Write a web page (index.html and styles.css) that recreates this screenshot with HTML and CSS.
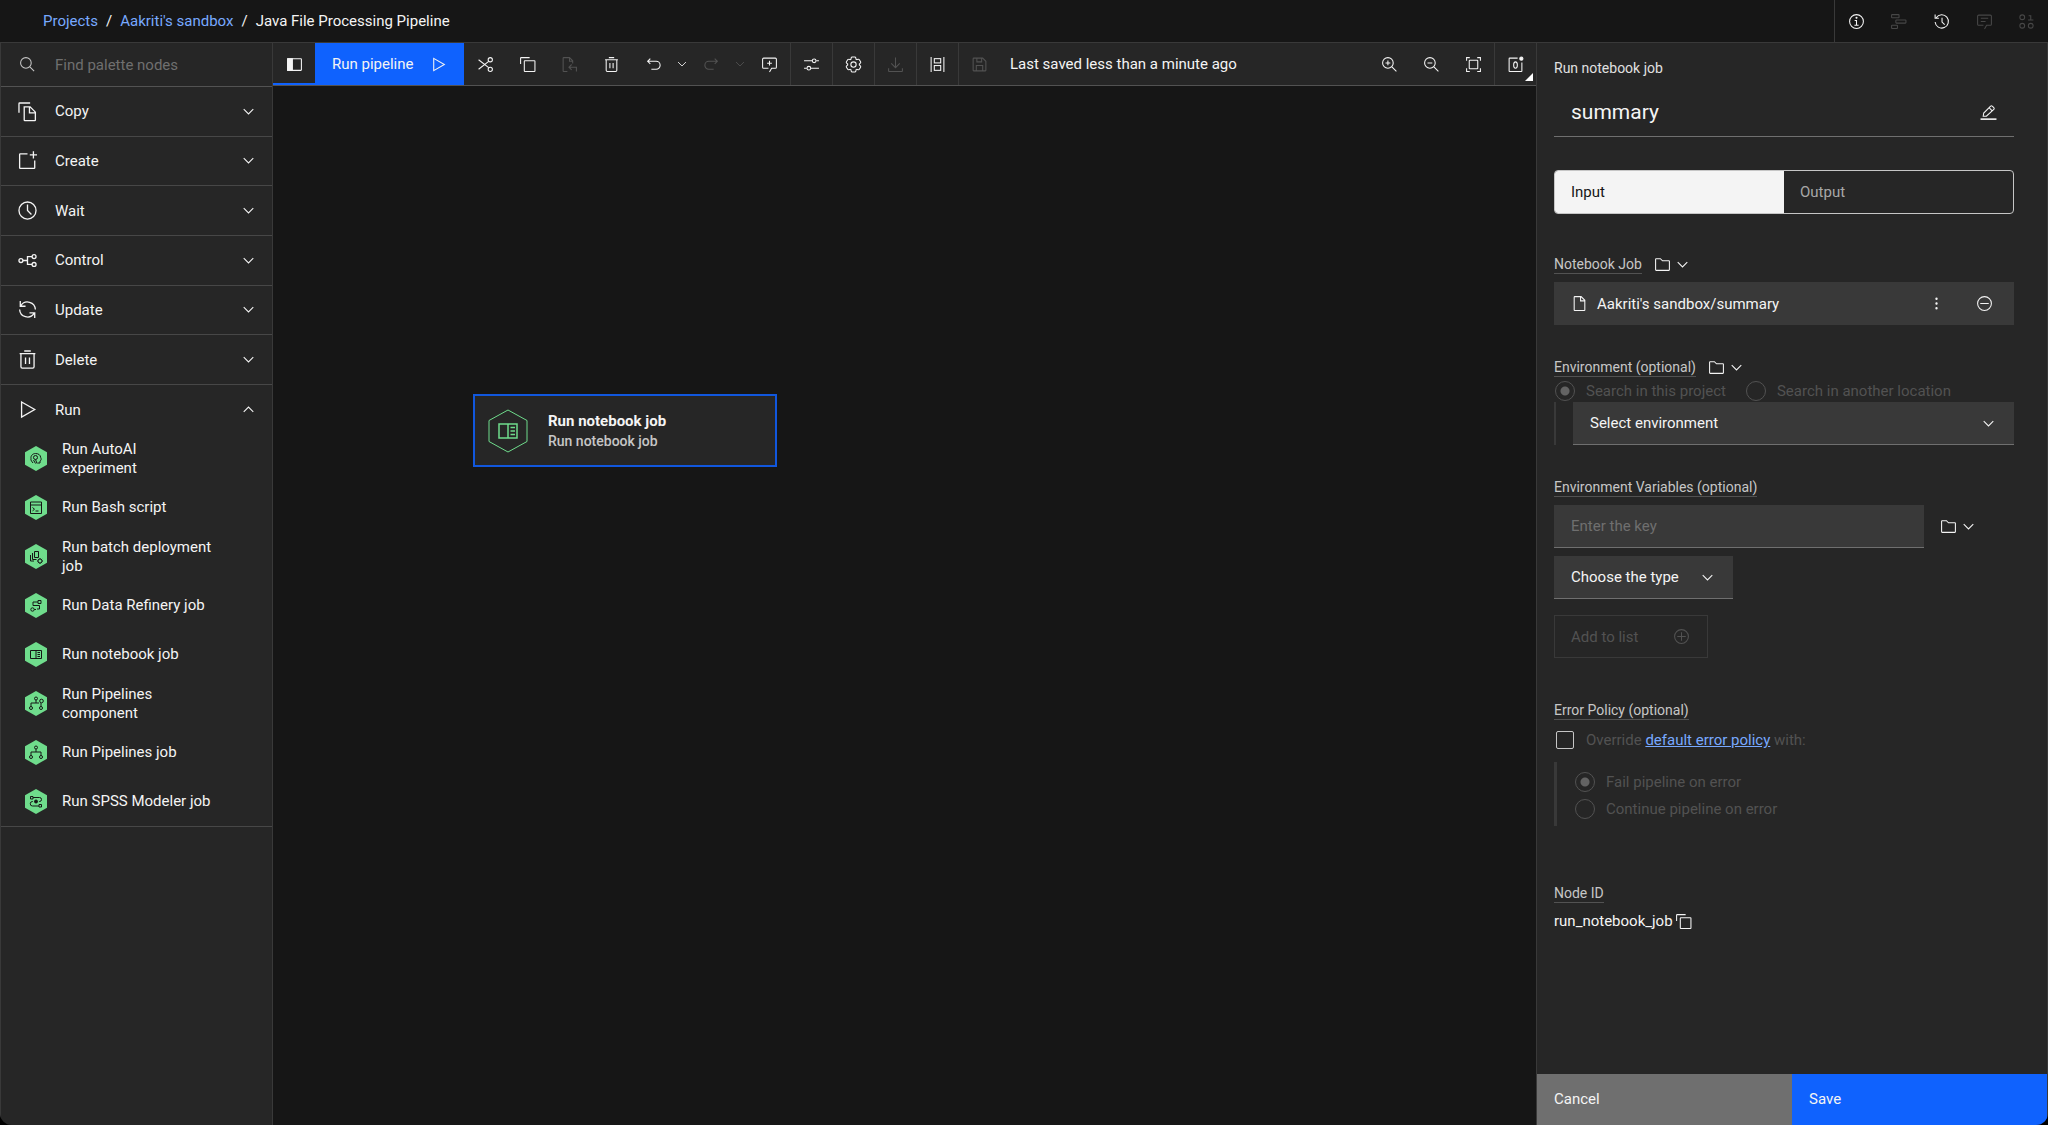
FILE: index.html
```html
<!DOCTYPE html>
<html lang="en">
<head>
<meta charset="utf-8">
<meta name="viewport" content="width=device-width, initial-scale=1">
<title>Java File Processing Pipeline</title>
<link rel="stylesheet" href="styles.css">
</head>
<body>
<svg class="sprite" aria-hidden="true">
  <symbol id="chevron-down" viewBox="0 0 32 32"><path d="M7 11.500l9 9 9-9"/></symbol>
  <symbol id="chevron-up" viewBox="0 0 32 32"><path d="M7 20.500l9-9 9 9"/></symbol>
  <symbol id="search" viewBox="0 0 32 32"><circle cx="13" cy="13" r="10"/><path d="M20.500 20.500L28.500 28.500"/></symbol>
  <symbol id="copy-file" viewBox="0 0 32 32"><path d="M3 18V4a1 1 0 0 1 1-1h16M11 9h9l8 8v12a1 1 0 0 1-1 1H12a1 1 0 0 1-1-1zM19 9v9h9"/></symbol>
  <symbol id="create" viewBox="0 0 32 32"><path d="M16 6H5a1 1 0 0 0-1 1v20a1 1 0 0 0 1 1h21a1 1 0 0 0 1-1V16M25 2v11M19.500 7.500h11"/></symbol>
  <symbol id="clock" viewBox="0 0 32 32"><circle cx="16" cy="16" r="13"/><path d="M16 7v9l6 6"/></symbol>
  <symbol id="control" viewBox="0 0 32 32"><circle cx="6" cy="16" r="3"/><circle cx="26" cy="10" r="3"/><circle cx="26" cy="22" r="3"/><path d="M9 16h7M23 10h-7v12h7"/></symbol>
  <symbol id="renew" viewBox="0 0 32 32"><path d="M6 10a12 12 0 0 1 22 6M5 3v8h8M26 22a12 12 0 0 1-22-6M27 29v-8h-8"/></symbol>
  <symbol id="trash" viewBox="0 0 32 32"><path d="M4 7h24M11 3h10M6 7v20a2 2 0 0 0 2 2h16a2 2 0 0 0 2-2V7M13 13v10M19 13v10"/></symbol>
  <symbol id="play" viewBox="0 0 32 32"><path d="M7 4.500L27 16 7 27.500z"/></symbol>
  <symbol id="panel" viewBox="0 0 32 32"><rect x="3" y="5" width="26" height="22" rx="1"/><path class="solid" d="M3 5h9v22H3z"/></symbol>
  <symbol id="cut" viewBox="0 0 32 32"><circle cx="25" cy="7" r="4"/><circle cx="25" cy="25" r="4"/><path d="M3 7l19 15M3 25L22 10"/></symbol>
  <symbol id="copy" viewBox="0 0 32 32"><rect x="10" y="9" width="20" height="20" rx="1"/><path d="M3 15V4a1 1 0 0 1 1-1h16"/></symbol>
  <symbol id="paste" viewBox="0 0 32 32"><path d="M12 29H5a1 1 0 0 1-1-1V4a1 1 0 0 1 1-1h11l6 6v5M16 3v7h6M29 29v-8H16M20 16l-5 5 5 5"/></symbol>
  <symbol id="undo" viewBox="0 0 32 32"><path d="M5 10h16a7.500 7.500 0 0 1 0 15h-9M10 5l-5 5 5 5"/></symbol>
  <symbol id="redo" viewBox="0 0 32 32"><path d="M27 10H11a7.500 7.500 0 0 0 0 15h9M22 5l5 5-5 5"/></symbol>
  <symbol id="comment-add" viewBox="0 0 32 32"><path d="M16 30l4-7h7a2 2 0 0 0 2-2V6a2 2 0 0 0-2-2H5a2 2 0 0 0-2 2v15a2 2 0 0 0 2 2h9M16 9v9M11.500 13.500h9"/></symbol>
  <symbol id="adjust" viewBox="0 0 32 32"><circle cx="21" cy="9" r="3.500"/><circle cx="11" cy="23" r="3.500"/><path d="M2 9h15M25 9h5M2 23h5M15 23h15"/></symbol>
  <symbol id="gear" viewBox="0 0 32 32"><circle cx="16" cy="16" r="5"/><path d="M27 16.760c0-.25 0-.5 0-.76s0-.51 0-.77l1.920-1.680A2 2 0 0 0 29.300 11L26.940 7a2 2 0 0 0-1.730-1 2 2 0 0 0-.64.1l-2.430.82a11.350 11.350 0 0 0-1.310-.75l-.51-2.520a2 2 0 0 0-2-1.610H13.640a2 2 0 0 0-2 1.610l-.51 2.520a11.480 11.480 0 0 0-1.320.75L7.430 6.060A2 2 0 0 0 6.790 6 2 2 0 0 0 5.060 7L2.700 11a2 2 0 0 0 .41 2.510L5 15.240c0 .25 0 .5 0 .76s0 .51 0 .77L3.110 18.450A2 2 0 0 0 2.700 21L5.060 25a2 2 0 0 0 1.730 1 2 2 0 0 0 .64-.1l2.430-.82a11.350 11.350 0 0 0 1.310.75l.51 2.520a2 2 0 0 0 2 1.610h4.720a2 2 0 0 0 2-1.610l.51-2.520a11.480 11.480 0 0 0 1.320-.75l2.420.82a2 2 0 0 0 .64.1 2 2 0 0 0 1.730-1L29.300 21a2 2 0 0 0-.41-2.510z"/></symbol>
  <symbol id="download" viewBox="0 0 32 32"><path d="M16 3v19M8 14l8 8 8-8M3 23v5a1 1 0 0 0 1 1h24a1 1 0 0 0 1-1v-5"/></symbol>
  <symbol id="arrange" viewBox="0 0 32 32"><path d="M4 2v28M28 2v28"/><rect x="10" y="5" width="12" height="8"/><rect x="10" y="18" width="12" height="9"/></symbol>
  <symbol id="save" viewBox="0 0 32 32"><path d="M5 4h17l6 6v17a1 1 0 0 1-1 1H5a1 1 0 0 1-1-1V5a1 1 0 0 1 1-1zM10 28V18h12v10M11 4v7h9V4"/></symbol>
  <symbol id="zoom-in" viewBox="0 0 32 32"><circle cx="13" cy="13" r="10"/><path d="M20.500 20.500L29 29M13 8.500v9M8.500 13h9"/></symbol>
  <symbol id="zoom-out" viewBox="0 0 32 32"><circle cx="13" cy="13" r="10"/><path d="M20.500 20.500L29 29M8.500 13h9"/></symbol>
  <symbol id="fit" viewBox="0 0 32 32"><rect x="8" y="8" width="16" height="16" rx="1"/><path d="M3 9V3h6M23 3h6v6M29 23v6h-6M9 29H3v-6"/></symbol>
  <symbol id="messages" viewBox="0 0 32 32"><path d="M20 4H5a1 1 0 0 0-1 1v23a1 1 0 0 0 1 1h22a1 1 0 0 0 1-1V12"/><ellipse cx="16" cy="17" rx="3.500" ry="6"/><circle class="solid" cx="27" cy="5" r="3"/></symbol>
  <symbol id="info" viewBox="0 0 32 32"><circle cx="16" cy="16" r="13"/><path d="M12.500 14H16v9M12 23h8"/><circle class="solid" cx="16" cy="9" r="1"/></symbol>
  <symbol id="flow" viewBox="0 0 32 32"><rect x="3" y="3" width="14" height="6" rx="1"/><rect x="11" y="13" width="19" height="6" rx="1"/><rect x="3" y="23" width="11" height="6" rx="1"/></symbol>
  <symbol id="history" viewBox="0 0 32 32"><path d="M6 9a12.500 12.500 0 1 1-2 8M4 3v7h7M17 9v8l5 5"/></symbol>
  <symbol id="comment" viewBox="0 0 32 32"><path d="M16 30l4-7h7a2 2 0 0 0 2-2V6a2 2 0 0 0-2-2H5a2 2 0 0 0-2 2v15a2 2 0 0 0 2 2h9M9 10h14M9 16h9"/></symbol>
  <symbol id="binary" viewBox="0 0 32 32"><circle cx="8" cy="8" r="4.500"/><circle cx="8" cy="24" r="4.500"/><circle cx="24" cy="24" r="4.500"/><path d="M20 5h4v8M19 13h10"/></symbol>
  <symbol id="edit" viewBox="0 0 32 32"><path d="M6 23l1-6L20 4a2 2 0 0 1 3 0l3 3a2 2 0 0 1 0 3L12 23zM17 7l6 6"/><path class="bar" d="M1 28.500h30"/></symbol>
  <symbol id="folder" viewBox="0 0 32 32"><path d="M4 5h8l4 4h12a1 1 0 0 1 1 1v16a1 1 0 0 1-1 1H4a1 1 0 0 1-1-1V6a1 1 0 0 1 1-1z"/></symbol>
  <symbol id="document" viewBox="0 0 32 32"><path d="M7 3h12l7 7v18a1 1 0 0 1-1 1H7a1 1 0 0 1-1-1V4a1 1 0 0 1 1-1zM18 3v8h8"/></symbol>
  <symbol id="overflow" viewBox="0 0 32 32"><circle class="solid" cx="16" cy="7" r="1.200"/><circle class="solid" cx="16" cy="16" r="1.200"/><circle class="solid" cx="16" cy="25" r="1.200"/></symbol>
  <symbol id="subtract" viewBox="0 0 32 32"><circle cx="16" cy="16" r="13"/><path d="M8 16h16"/></symbol>
  <symbol id="add" viewBox="0 0 32 32"><circle cx="16" cy="16" r="13"/><path d="M8 16h16M16 8v16"/></symbol>
  <symbol id="hexagon" viewBox="0 0 22 25"><path d="M11 0l11 6.250v12.500L11 25 0 18.750V6.250z"/></symbol>
</svg>

<header class="topbar">
  <nav class="breadcrumb" aria-label="Breadcrumb">
    <a href="#">Projects</a><span>/</span><a href="#">Aakriti's sandbox</a><span>/</span><span class="current">Java File Processing Pipeline</span>
  </nav>
  <div class="topbar-actions">
    <button type="button" aria-label="Information"><svg class="icon"><use href="#info"/></svg></button>
    <button type="button" aria-label="Flow" disabled><svg class="icon"><use href="#flow"/></svg></button>
    <button type="button" aria-label="History"><svg class="icon"><use href="#history"/></svg></button>
    <button type="button" aria-label="Comments" disabled><svg class="icon"><use href="#comment"/></svg></button>
    <button type="button" aria-label="Parameters" disabled><svg class="icon"><use href="#binary"/></svg></button>
  </div>
</header>

<div class="workspace">
  <aside class="palette">
    <div class="palette-search">
      <svg class="icon"><use href="#search"/></svg>
      <input type="search" placeholder="Find palette nodes" aria-label="Find palette nodes">
    </div>
    <div class="categories">
      <button type="button" class="category"><svg class="icon large"><use href="#copy-file"/></svg><span>Copy</span><svg class="icon"><use href="#chevron-down"/></svg></button>
      <button type="button" class="category"><svg class="icon large"><use href="#create"/></svg><span>Create</span><svg class="icon"><use href="#chevron-down"/></svg></button>
      <button type="button" class="category"><svg class="icon large"><use href="#clock"/></svg><span>Wait</span><svg class="icon"><use href="#chevron-down"/></svg></button>
      <button type="button" class="category"><svg class="icon large"><use href="#control"/></svg><span>Control</span><svg class="icon"><use href="#chevron-down"/></svg></button>
      <button type="button" class="category"><svg class="icon large"><use href="#renew"/></svg><span>Update</span><svg class="icon"><use href="#chevron-down"/></svg></button>
      <button type="button" class="category"><svg class="icon large"><use href="#trash"/></svg><span>Delete</span><svg class="icon"><use href="#chevron-down"/></svg></button>
    </div>
    <button type="button" class="category open"><svg class="icon large"><use href="#play"/></svg><span>Run</span><svg class="icon"><use href="#chevron-up"/></svg></button>
    <ul class="nodes">
      <li><svg class="badge" viewBox="0 0 22 25"><use class="hex" href="#hexagon" width="22" height="25"/><path d="M8 17c-1-1.500-2.500-2.500-2-4.500C5.500 9.500 8 7.500 10.500 7.500c3 0 5 1.500 5.200 4 .8 1.500.5 3-.7 3.500v2h-2.500M8.500 14l2 3.500M10.500 13.500l1.500 4"/><circle cx="10.500" cy="11.500" r="2"/></svg><span>Run AutoAI experiment</span></li>
      <li><svg class="badge" viewBox="0 0 22 25"><use class="hex" href="#hexagon" width="22" height="25"/><path d="M5.500 7h11v11.500h-11zM5.500 10h11M7.500 12.500l2 1.700-2 1.700M10.500 16h3"/></svg><span>Run Bash script</span></li>
      <li><svg class="badge" viewBox="0 0 22 25"><use class="hex" href="#hexagon" width="22" height="25"/><path d="M9.500 7.500h4v6h-4zM7.500 9v6.500h4M5.500 11v6h3.500"/><circle cx="15" cy="17" r="2"/><path d="M15 14v1M15 19v1M12 17h1M17 17h1M12.900 14.900l.7.7M16.400 18.400l.7.7M17.100 14.900l-.7.7M13.600 18.400l-.7.7"/></svg><span>Run batch deployment job</span></li>
      <li><svg class="badge" viewBox="0 0 22 25"><use class="hex" href="#hexagon" width="22" height="25"/><circle cx="7.500" cy="16.500" r="1.700"/><path d="M13 7.500h3v3h-3zM13 9H8v3.500h6.500V16H12M9.200 16.500H11"/></svg><span>Run Data Refinery job</span></li>
      <li><svg class="badge" viewBox="0 0 22 25"><use class="hex" href="#hexagon" width="22" height="25"/><path d="M5.500 8.500h11v8h-11zM11 8.500v8M12.500 10.500H15M12.500 12.500H15M12.500 14.500H15"/></svg><span>Run notebook job</span></li>
      <li><svg class="badge" viewBox="0 0 22 25"><use class="hex" href="#hexagon" width="22" height="25"/><circle cx="11" cy="7.500" r="1.500"/><circle cx="6" cy="17" r="1.500"/><circle cx="16" cy="17" r="1.500"/><path d="M11 9v3M6 15.500V12h8M16 15.500V12"/><circle cx="16.500" cy="10" r="1.800"/></svg><span>Run Pipelines component</span></li>
      <li><svg class="badge" viewBox="0 0 22 25"><use class="hex" href="#hexagon" width="22" height="25"/><circle cx="11" cy="7.500" r="1.500"/><circle cx="6" cy="17" r="1.500"/><circle cx="16" cy="17" r="1.500"/><path d="M11 9v3M6 15.500V12h10v3.500"/></svg><span>Run Pipelines job</span></li>
      <li><svg class="badge" viewBox="0 0 22 25"><use class="hex" href="#hexagon" width="22" height="25"/><path d="M5.500 7.500H8V10H5.500zM14 15.500h2.500V18H14zM8 8.500h6.500a1.500 1.500 0 0 1 0 4H14M14 17H7.500a1.700 1.700 0 0 1 0-4.500H8"/><circle class="dot" cx="11" cy="12.500" r="1.500"/></svg><span>Run SPSS Modeler job</span></li>
    </ul>
  </aside>

  <main class="editor">
    <div class="toolbar" role="toolbar" aria-label="Canvas tools">
      <button type="button" class="tool active" aria-label="Toggle palette"><svg class="icon"><use href="#panel"/></svg></button>
      <button type="button" class="run">Run pipeline<svg class="icon"><use href="#play"/></svg></button>
      <button type="button" class="tool" aria-label="Cut"><svg class="icon"><use href="#cut"/></svg></button>
      <button type="button" class="tool" aria-label="Copy"><svg class="icon"><use href="#copy"/></svg></button>
      <button type="button" class="tool" aria-label="Paste" disabled><svg class="icon"><use href="#paste"/></svg></button>
      <button type="button" class="tool" aria-label="Delete"><svg class="icon"><use href="#trash"/></svg></button>
      <button type="button" class="tool" aria-label="Undo"><svg class="icon"><use href="#undo"/></svg></button>
      <button type="button" class="tool narrow" aria-label="Undo options"><svg class="icon small"><use href="#chevron-down"/></svg></button>
      <button type="button" class="tool" aria-label="Redo" disabled><svg class="icon"><use href="#redo"/></svg></button>
      <button type="button" class="tool narrow" aria-label="Redo options" disabled><svg class="icon small"><use href="#chevron-down"/></svg></button>
      <button type="button" class="tool" aria-label="Add comment"><svg class="icon"><use href="#comment-add"/></svg></button>
      <button type="button" class="tool divided" aria-label="Adjust"><svg class="icon"><use href="#adjust"/></svg></button>
      <button type="button" class="tool divided" aria-label="Settings"><svg class="icon"><use href="#gear"/></svg></button>
      <button type="button" class="tool divided" aria-label="Download" disabled><svg class="icon"><use href="#download"/></svg></button>
      <button type="button" class="tool divided" aria-label="Arrange"><svg class="icon"><use href="#arrange"/></svg></button>
      <button type="button" class="tool divided" aria-label="Save" disabled><svg class="icon"><use href="#save"/></svg></button>
      <span class="saved">Last saved less than a minute ago</span>
      <button type="button" class="tool" aria-label="Zoom in"><svg class="icon"><use href="#zoom-in"/></svg></button>
      <button type="button" class="tool" aria-label="Zoom out"><svg class="icon"><use href="#zoom-out"/></svg></button>
      <button type="button" class="tool" aria-label="Zoom to fit"><svg class="icon"><use href="#fit"/></svg></button>
      <button type="button" class="tool divided corner" aria-label="Messages"><svg class="icon"><use href="#messages"/></svg></button>
    </div>
    <div class="canvas">
      <div class="node">
        <svg class="node-icon" viewBox="0 0 40 44"><path d="M20 1l19 10.500v21L20 43 1 32.500v-21z"/><path class="thick" d="M11 15h18v14H11zM20 15v14M22.500 18.500H27M22.500 22H27M22.500 25.500H27"/></svg>
        <div><strong>Run notebook job</strong><span>Run notebook job</span></div>
      </div>
    </div>
  </main>

  <aside class="details">
    <form class="fields">
      <p class="kind">Run notebook job</p>
      <div class="name"><input type="text" value="summary" aria-label="Node name"><button type="button" aria-label="Edit name"><svg class="icon"><use href="#edit"/></svg></button></div>
      <div class="switcher" role="tablist">
        <button type="button" role="tab" aria-selected="true">Input</button>
        <button type="button" role="tab" aria-selected="false">Output</button>
      </div>

      <section class="group first">
        <div class="heading"><span class="label">Notebook Job</span><button type="button" class="source" aria-label="Notebook job source"><svg class="icon"><use href="#folder"/></svg><svg class="icon"><use href="#chevron-down"/></svg></button></div>
        <div class="file"><svg class="icon"><use href="#document"/></svg><span>Aakriti's sandbox/summary</span><button type="button" aria-label="More"><svg class="icon"><use href="#overflow"/></svg></button><button type="button" aria-label="Remove"><svg class="icon"><use href="#subtract"/></svg></button></div>
      </section>

      <section class="group">
        <div class="heading"><label class="label" for="environment">Environment (optional)</label><button type="button" class="source" aria-label="Environment source"><svg class="icon"><use href="#folder"/></svg><svg class="icon"><use href="#chevron-down"/></svg></button></div>
        <div class="options"><label><input type="radio" name="scope" checked disabled>Search in this project</label><label><input type="radio" name="scope" disabled>Search in another location</label></div>
        <div class="nested"><div class="select"><select id="environment"><option>Select environment</option></select><svg class="icon"><use href="#chevron-down"/></svg></div></div>
      </section>

      <section class="group">
        <div class="heading"><label class="label" for="key">Environment Variables (optional)</label></div>
        <div class="key-row"><input id="key" class="key" type="text" placeholder="Enter the key"><button type="button" class="source" aria-label="Key source"><svg class="icon"><use href="#folder"/></svg><svg class="icon"><use href="#chevron-down"/></svg></button></div>
        <div class="select type"><select aria-label="Variable type"><option>Choose the type</option></select><svg class="icon"><use href="#chevron-down"/></svg></div>
        <button type="button" class="add" disabled>Add to list<svg class="icon"><use href="#add"/></svg></button>
      </section>

      <section class="group policy">
        <div class="heading"><span class="label">Error Policy (optional)</span></div>
        <div class="override"><input type="checkbox" id="override"><label for="override">Override <a href="#">default error policy</a> with:</label></div>
        <div class="choices"><label><input type="radio" name="policy" checked disabled>Fail pipeline on error</label><label><input type="radio" name="policy" disabled>Continue pipeline on error</label></div>
      </section>

      <section class="group identity">
        <div class="heading"><span class="label">Node ID</span></div>
        <div class="node-id"><span>run_notebook_job</span><button type="button" aria-label="Copy node ID"><svg class="icon"><use href="#copy"/></svg></button></div>
      </section>
    </form>
    <footer class="actions"><button type="button" class="cancel">Cancel</button><button type="button" class="submit">Save</button></footer>
  </aside>
</div>
</body>
</html>
```
FILE: styles.css
```css
:root {
  --bg: #161616;
  --layer: #262626;
  --field: #393939;
  --line: #393939;
  --line-strong: #6f6f6f;
  --text: #f4f4f4;
  --text-soft: #c6c6c6;
  --text-off: #525252;
  --blue: #0f62fe;
  --green: #6fdc8c;
}

* { box-sizing: border-box; }

html { background: #000; }

body {
  margin: 0;
  min-height: 100vh;
  display: flex;
  flex-direction: column;
  overflow: hidden;
  border-radius: 0 0 12px 12px;
  background: var(--bg);
  color: var(--text);
  font: 15px/20px Roboto, "Noto Sans", sans-serif;
}

button, input, select { font: inherit; color: inherit; }

button {
  padding: 0;
  border: 0;
  background: none;
  display: flex;
  align-items: center;
  text-align: left;
}

button:disabled { color: var(--text-off); }

input { min-width: 0; border: 0; border-radius: 0; background: none; }
input::placeholder { color: var(--line-strong); opacity: 1; }

p, ul { margin: 0; padding: 0; }

a { color: #78a9ff; }

.sprite { position: absolute; width: 0; height: 0; }

.icon {
  flex: none;
  width: 17px;
  height: 17px;
  fill: none;
  stroke: currentColor;
  stroke-width: 2;
}
.icon.large { width: 21px; height: 21px; }
.icon.small { width: 14px; height: 14px; }
.solid { fill: currentColor; }
.bar { stroke-width: 3; }

/* Top bar */
.topbar {
  height: 43px;
  display: flex;
  justify-content: space-between;
  border-bottom: 1px solid var(--line);
}
.breadcrumb { display: flex; align-items: center; gap: 8px; padding-left: 43px; }
.breadcrumb a { text-decoration: none; }
.topbar-actions {
  width: 214px;
  display: grid;
  grid-template-columns: repeat(5, 1fr);
  border-left: 1px solid var(--line);
}
.topbar-actions button { justify-content: center; }
.topbar-actions button:disabled { color: #474747; }

.workspace {
  flex: 1;
  display: grid;
  grid-template-columns: 273px minmax(0, 1fr) 512px;
}

/* Palette */
.palette {
  background: var(--layer);
  border-left: 1px solid var(--line);
  border-right: 1px solid var(--line);
}
.palette-search {
  height: 44px;
  display: flex;
  align-items: center;
  gap: 19px;
  padding: 0 18px;
  border-bottom: 1px solid #525252;
  color: var(--text-soft);
}
.palette-search input { flex: 1; padding: 0; }
.categories { height: 298px; display: grid; grid-auto-rows: 1fr; }
.category {
  width: 100%;
  padding: 0 15px 0 16px;
  gap: 17px;
  border-bottom: 1px solid #474747;
}
.category span { flex: 1; }
.category.open { height: 49px; border: 0; }
.nodes { list-style: none; border-bottom: 1px solid #474747; }
.nodes li {
  height: 49px;
  display: flex;
  align-items: center;
  gap: 15px;
  padding: 0 58px 0 24px;
  line-height: 19px;
}
.badge {
  flex: none;
  width: 22px;
  height: 25px;
  fill: none;
  stroke: #161616;
}
.hex { fill: var(--green); stroke: none; }
.dot { fill: #161616; }

/* Toolbar */
.editor { display: flex; flex-direction: column; }
.toolbar {
  height: 43px;
  display: flex;
  background: var(--layer);
  border-bottom: 1px solid #525252;
}
.tool { width: 42px; justify-content: center; }
.tool.narrow { width: 16px; }
.tool.divided { border-left: 1px solid var(--line); }
.tool.active { box-shadow: inset 0 -2px var(--blue); }
.corner { position: relative; }
.corner::after {
  content: "";
  position: absolute;
  right: 3px;
  bottom: 4px;
  border: 4px solid transparent;
  border-right-color: #fff;
  border-bottom-color: #fff;
}
.run {
  width: 149px;
  justify-content: space-between;
  padding: 0 17px;
  background: var(--blue);
}
.saved { flex: 1; align-self: center; padding-left: 10px; }

/* Canvas */
.canvas { flex: 1; position: relative; }
.node {
  position: absolute;
  left: 200px;
  top: 308px;
  width: 304px;
  height: 73px;
  display: flex;
  align-items: center;
  gap: 20px;
  padding-left: 13px;
  background: var(--layer);
  border: 2px solid #1157dd;
}
.node-icon { width: 40px; height: 44px; fill: none; stroke: var(--green); }
.thick { stroke-width: 1.5; }
.node strong, .node span { display: block; }
.node strong { font-weight: 700; }
.node span { font-size: 14px; font-weight: 500; color: var(--text-soft); }

/* Details */
.details {
  display: flex;
  flex-direction: column;
  background: var(--layer);
  border-left: 1px solid var(--line);
  border-right: 1px solid var(--line);
}
.fields { flex: 1; padding: 16px 33px 17px 17px; }
.kind { font-size: 14px; line-height: 18px; color: #e0e0e0; }
.name {
  height: 49px;
  margin-top: 11px;
  display: flex;
  align-items: center;
  padding: 0 17px;
  border-bottom: 1px solid var(--line-strong);
}
.name input { flex: 1; padding: 0; font-size: 21px; line-height: 28px; }
.switcher {
  height: 44px;
  margin-top: 33px;
  display: grid;
  grid-template-columns: 1fr 1fr;
  overflow: hidden;
  border: 1px solid var(--text-soft);
  border-radius: 4px;
}
.switcher button { padding-left: 16px; color: #a8a8a8; }
.switcher [aria-selected="true"] { background: var(--text); color: #161616; }

.group { margin-top: 33px; }
.group.first { margin-top: 41px; }
.group.policy { margin-top: 43px; }
.group.identity { margin-top: 58px; }
.heading { display: flex; align-items: center; gap: 12px; height: 19px; margin-bottom: 8px; }
.label { font-size: 14px; line-height: 18px; color: var(--text-soft); border-bottom: 1px solid #525252; }
.source { gap: 3px; }

.file {
  height: 43px;
  display: flex;
  align-items: center;
  padding: 0 21px 0 17px;
  gap: 9px;
  background: var(--field);
}
.file span { flex: 1; }
.file button + button { margin-left: 22px; }

.options { display: flex; gap: 20px; margin-top: -4px; }
.options label, .choices label {
  display: flex;
  align-items: center;
  gap: 11px;
  height: 20px;
  color: var(--text-off);
}
.options label:first-child { padding-left: 1px; }
input[type="radio"] {
  appearance: none;
  flex: none;
  width: 20px;
  height: 20px;
  margin: 0;
  border: 1px solid var(--text-off);
  border-radius: 50%;
}
input[type="radio"]:checked { background: radial-gradient(circle, #636363 4px, transparent 5px); }

.nested { margin-top: 1px; padding-left: 17px; border-left: 2px solid var(--line); }
.select { display: grid; align-items: center; }
.select > * { grid-area: 1 / 1; }
.select select {
  appearance: none;
  width: 100%;
  height: 43px;
  padding: 0 17px;
  border: 0;
  border-bottom: 1px solid var(--line-strong);
  border-radius: 0;
  background: var(--field);
}
.select .icon { justify-self: end; margin-right: 17px; pointer-events: none; }
.select.type { width: 179px; margin-top: 8px; }

.key-row { display: flex; align-items: center; gap: 16px; padding-right: 37px; }
.key {
  flex: 1;
  height: 43px;
  padding: 0 17px;
  background: var(--field);
  border-bottom: 1px solid var(--line-strong);
}
.add {
  width: 154px;
  height: 43px;
  margin-top: 16px;
  padding: 0 17px 0 16px;
  justify-content: space-between;
  border: 1px solid var(--line);
}

.override { display: flex; align-items: center; gap: 12px; height: 20px; padding-left: 2px; margin-top: 10px; color: var(--text-off); }
input[type="checkbox"] {
  appearance: none;
  flex: none;
  width: 18px;
  height: 18px;
  margin: 0;
  border: 1px solid var(--text-soft);
  border-radius: 2px;
}
.choices {
  margin-top: 12px;
  padding: 10px 0 7px 18px;
  display: grid;
  gap: 7px;
  border-left: 3px solid var(--line);
}
.node-id { display: flex; align-items: center; gap: 2px; }

.actions { height: 51px; display: grid; grid-template-columns: 1fr 1fr; }
.actions button { padding-left: 17px; padding-bottom: 2px; }
.cancel { background: #6f6f6f; }
.submit { background: var(--blue); }
```
